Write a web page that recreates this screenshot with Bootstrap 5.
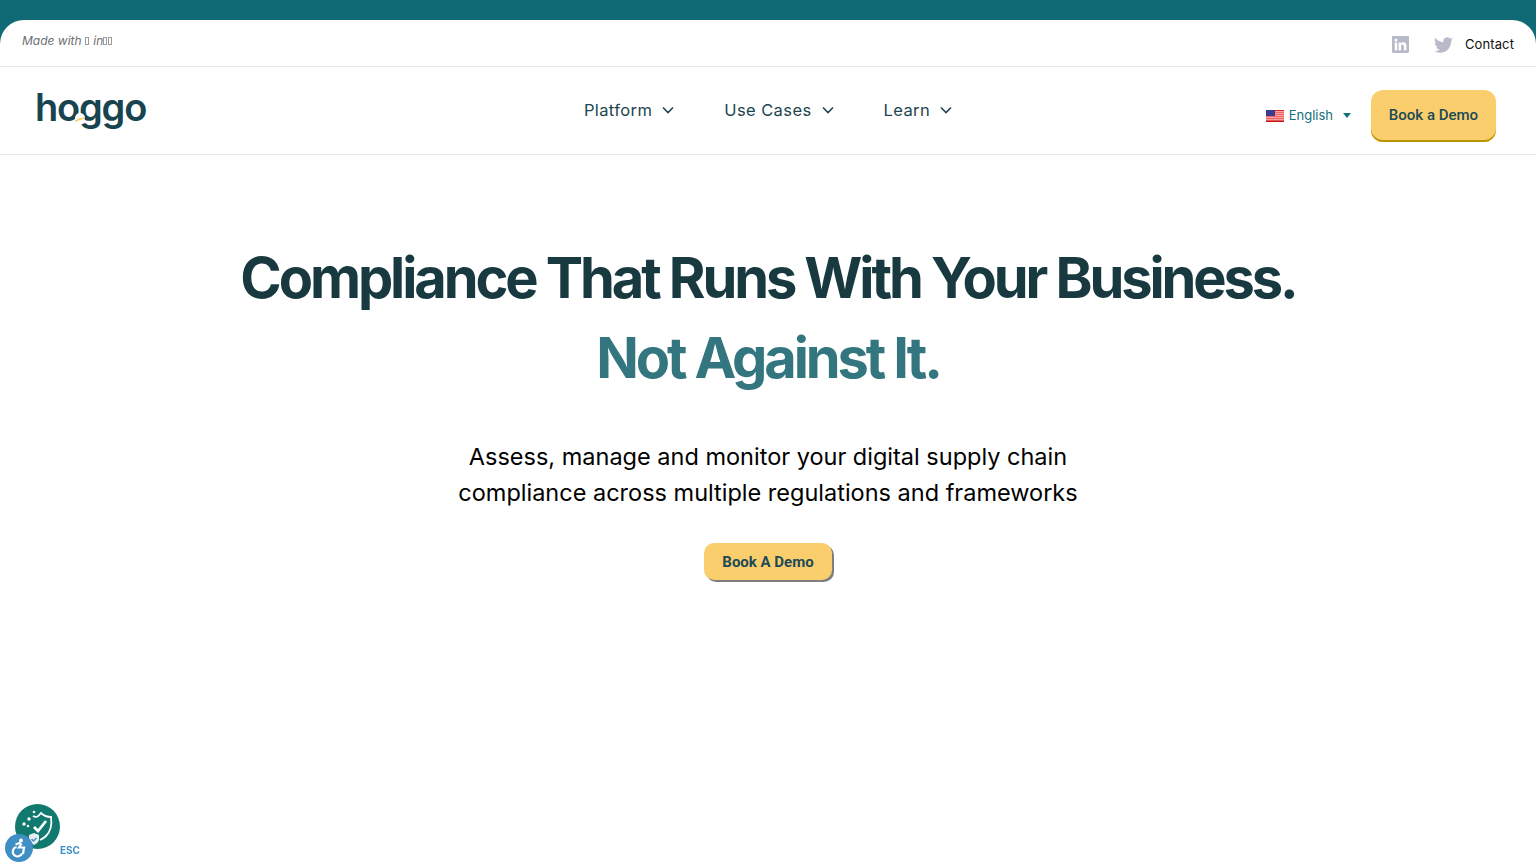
<!doctype html>
<html lang="en">
<head>
  <meta charset="utf-8">
  <meta name="viewport" content="width=device-width, initial-scale=1">
  <title>Hoggo</title>
  <link href="https://cdn.jsdelivr.net/npm/bootstrap@5.3.0/dist/css/bootstrap.min.css" rel="stylesheet">
  <style>
    body { background: #0f6a75; font-family: "Inter", "Liberation Sans", sans-serif; overflow: hidden; }
    .page-sheet { margin-top: 20px; background: #fff; border-radius: 24px 24px 0 0; height: 844px; }
    /* top strip */
    .top-strip { height: 47px; padding: 0 22px; border-bottom: 1px solid #e4e6e7; }
    .made-with { font-size: 12px; line-height: 18px; font-style: italic; color: #6c6f72; margin-top: 12px; }
    .tofu-box { display: inline-block; width: 4px; height: 8px; border: 1px solid #9a9c9e; margin: 0 1px 0 0; }
    .strip-right { margin-top: 15px; }
    .strip-icon { fill: #b9bac9; display: block; }
    .icon-in { margin-right: 25px; }
    .icon-bird { margin-right: 12px; }
    .contact-link { font-size: 13px; color: #111; text-decoration: none; letter-spacing: .12px; }
    /* main nav */
    .main-nav { display: grid; grid-template-columns: 1fr auto 1fr; height: 88px; padding: 0 40px; border-bottom: 1px solid #e4e6e7; }
    .brand-logo { position: relative; display: inline-block; font-size: 38px; font-weight: 600; line-height: 1; color: #17444f; letter-spacing: -1.2px; text-decoration: none; margin: 21px 0 0 -5px; }
    .brand-mark { position: absolute; left: 39px; top: 25px; }
    .menu-links { display: flex; gap: 50px; padding-top: 32px; }
    .menu-link { font-size: 16.5px; line-height: 22px; color: #1c4650; text-decoration: none; display: flex; align-items: center; gap: 10px; letter-spacing: .4px; height: 22px; }
    .lang-pick { font-size: 13px; color: #17707b; margin-top: 39px; margin-right: 20px; }
    .lang-flag { margin-right: 5px; }
    .lang-caret { width: 0; height: 0; border-left: 4.5px solid transparent; border-right: 4.5px solid transparent; border-top: 5px solid #17707b; margin-left: 10px; }
    .btn-demo { background: #fbce6d; color: #1b4a57; font-family: "Roboto", sans-serif; font-weight: 500; font-size: 15px; border: 0; border-radius: 12px; width: 125px; height: 52px; padding: 0 0 2px; box-shadow: inset 0 -2px 0 #b99400; margin-top: 23px; }
    .btn-demo:hover { background: #fbce6d; color: #1b4a57; }
    /* hero */
    .hero-title { font-size: 56px; line-height: 80px; font-weight: 700; letter-spacing: -3.1px; color: #17393f; margin: 83px 0 0; }
    .hero-title span { display: block; }
    .hero-accent { color: #34767f; }
    .hero-sub { font-size: 23.5px; line-height: 36px; color: #000; margin: 41px 0 0; }
    .btn-hero { background: #fbce6d; color: #1b4a57; font-family: "Roboto", sans-serif; font-weight: 700; font-size: 15px; border: 0; border-radius: 10px; width: 128px; height: 37px; padding: 2px 0 0; box-shadow: 2px 2px 0 #7f7f7f; margin-top: 32px; }
    .btn-hero:hover { background: #fbce6d; color: #1b4a57; }
    /* floating widgets */
    .trust-badge { position: fixed; left: 15px; top: 804px; }
    .access-badge { position: fixed; left: 5px; top: 834px; }
    .esc-label { position: fixed; left: 60px; top: 843px; font-size: 10px; font-weight: 700; color: #3f8fc4; }
  </style>
</head>
<body>
  <div class="page-sheet">
    <div class="top-strip d-flex justify-content-between align-items-start">
      <div class="made-with">Made with <span class="tofu-box"></span> in<span class="tofu-box"></span><span class="tofu-box"></span></div>
      <div class="strip-right d-flex align-items-center">
        <svg class="strip-icon icon-in" width="17" height="17" viewBox="0 0 16 16"><path d="M0 1.146C0 .513.526 0 1.175 0h13.65C15.474 0 16 .513 16 1.146v13.708c0 .633-.526 1.146-1.175 1.146H1.175C.526 16 0 15.487 0 14.854V1.146zm4.943 12.248V6.169H2.542v7.225h2.401zm-1.2-8.212c.837 0 1.358-.554 1.358-1.248-.015-.709-.52-1.248-1.342-1.248-.822 0-1.359.54-1.359 1.248 0 .694.521 1.248 1.327 1.248h.016zm4.908 8.212V9.359c0-.216.016-.432.08-.586.173-.431.568-.878 1.232-.878.869 0 1.216.662 1.216 1.634v3.865h2.401V9.25c0-2.22-1.184-3.252-2.764-3.252-1.274 0-1.845.7-2.165 1.193v.025h-.016a5.54 5.54 0 0 1 .016-.025V6.169h-2.4c.03.678 0 7.225 0 7.225h2.4z"/></svg>
        <svg class="strip-icon icon-bird" width="19" height="19" viewBox="0 0 16 16"><path d="M5.026 15c6.038 0 9.341-5.003 9.341-9.334 0-.14 0-.282-.006-.422A6.685 6.685 0 0 0 16 3.542a6.658 6.658 0 0 1-1.889.518 3.301 3.301 0 0 0 1.447-1.817 6.533 6.533 0 0 1-2.087.793A3.286 3.286 0 0 0 7.875 6.03a9.325 9.325 0 0 1-6.767-3.429 3.289 3.289 0 0 0 1.018 4.382A3.323 3.323 0 0 1 .64 6.575v.045a3.288 3.288 0 0 0 2.632 3.218 3.203 3.203 0 0 1-.865.115 3.23 3.23 0 0 1-.614-.057 3.283 3.283 0 0 0 3.067 2.277A6.588 6.588 0 0 1 .78 13.58a6.32 6.32 0 0 1-.78-.045A9.344 9.344 0 0 0 5.026 15z"/></svg>
        <a class="contact-link" href="#">Contact</a>
      </div>
    </div>

    <nav class="main-nav">
      <div>
        <a class="brand-logo" href="#">hoggo
          <svg class="brand-mark" width="12" height="10" viewBox="0 0 12 10"><circle cx="6" cy="5" r="5" fill="#fff"/><path d="M1 8c3 0 3-2 5-2 2 0 3-1 5-1" fill="none" stroke="#fbce6d" stroke-width="1.800"/></svg>
        </a>
      </div>
      <div class="menu-links">
        <a class="menu-link" href="#">Platform <svg width="12" height="8" viewBox="0 0 12 8"><path d="M1 1.500l5 5 5-5" fill="none" stroke="#1c4650" stroke-width="1.600"/></svg></a>
        <a class="menu-link" href="#">Use Cases <svg width="12" height="8" viewBox="0 0 12 8"><path d="M1 1.500l5 5 5-5" fill="none" stroke="#1c4650" stroke-width="1.600"/></svg></a>
        <a class="menu-link" href="#">Learn <svg width="12" height="8" viewBox="0 0 12 8"><path d="M1 1.500l5 5 5-5" fill="none" stroke="#1c4650" stroke-width="1.600"/></svg></a>
      </div>
      <div class="d-flex justify-content-end align-items-start">
        <div class="lang-pick d-flex align-items-center">
          <svg class="lang-flag" width="18" height="12" viewBox="0 0 18 12">
            <rect width="18" height="12" fill="#f4a0a0"/>
            <rect y="0" width="18" height="1" fill="#d22"/><rect y="2" width="18" height="1" fill="#e66"/>
            <rect y="4" width="18" height="1" fill="#e66"/><rect y="6" width="18" height="1" fill="#e66"/>
            <rect y="8" width="18" height="1" fill="#e66"/><rect y="10.500" width="18" height="1.500" fill="#c11"/>
            <rect width="9" height="6" fill="#3c3b8e"/>
          </svg>
          <span>English</span>
          <span class="lang-caret"></span>
        </div>
        <button class="btn btn-demo" type="button">Book a Demo</button>
      </div>
    </nav>

    <section class="text-center">
      <h1 class="hero-title"><span>Compliance That Runs With Your Business.</span><span class="hero-accent">Not Against It.</span></h1>
      <p class="hero-sub">Assess, manage and monitor your digital supply chain<br>compliance across multiple regulations and frameworks</p>
      <button class="btn btn-hero" type="button">Book A Demo</button>
    </section>
  </div>

  <svg class="trust-badge" width="45" height="45" viewBox="0 0 45 45">
    <circle cx="22.500" cy="22.500" r="22.500" fill="#12796f"/>
    <path d="M18 12c3 2 5 1 8-3 3 3 7 4 10 4 1 7 0 14-5 19-2 2-4 3-6 4" fill="none" stroke="#fff" stroke-width="1.800"/>
    <path d="M19 23l4 4 8-10" fill="none" stroke="#fff" stroke-width="2.800"/>
    <circle cx="14" cy="15" r="1.700" fill="#fff"/><circle cx="9" cy="20" r="1.700" fill="#fff"/><circle cx="19" cy="8" r="1.300" fill="#fff"/><circle cx="13" cy="22" r="1.300" fill="#fff"/>
    <path d="M14 31l5-2 5 2v4c0 3-3 5-5 6-2-1-5-3-5-6z" fill="#e8eef0"/>
    <path d="M16.500 35l2 2 3-3" fill="none" stroke="#3f8fc4" stroke-width="1.500"/>
  </svg>
  <svg class="access-badge" width="28" height="28" viewBox="0 0 28 28">
    <circle cx="14" cy="14" r="14" fill="#3f8fc4"/>
    <circle cx="16" cy="6.500" r="2" fill="#fff"/>
    <path d="M10.500 10.500l4-1.500 1.500 1.500-2 3h5l-1 6.500" fill="none" stroke="#fff" stroke-width="2.200"/>
    <path d="M11.500 13a4.800 4.800 0 1 0 5.500 6.500" fill="none" stroke="#fff" stroke-width="2.200"/>
  </svg>
  <div class="esc-label">ESC</div>

  <script src="https://cdn.jsdelivr.net/npm/bootstrap@5.3.0/dist/js/bootstrap.bundle.min.js"></script>
</body>
</html>
